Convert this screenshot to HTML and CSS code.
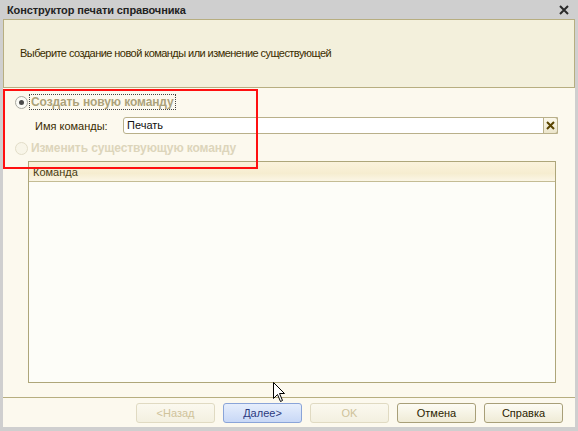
FILE: index.html
```html
<!DOCTYPE html>
<html lang="ru">
<head>
<meta charset="utf-8">
<link rel="stylesheet" href="styles.css">
</head>
<body>
<div class="window">
  <div class="titlebar">
    <span class="title">Конструктор печати справочника</span>
    <svg class="close" width="10" height="10" viewBox="0 0 10 10"><path d="M1 1L9 9M9 1L1 9" stroke="#2a2a2a" stroke-width="2"/></svg>
  </div>
  <div class="content">
    <div class="header">Выберите создание новой команды или изменение существующей</div>
    <div class="main">
      <div class="radio-row">
        <span class="radio checked"></span>
        <span class="radio-label focus">Создать новую команду</span>
      </div>
      <div class="name-row">
        <span class="name-label">Имя команды:</span>
        <div class="input">
          <span class="input-text">Печать</span>
          <span class="clear"><svg width="9" height="9" viewBox="0 0 9 9"><path d="M1 1L8 8M8 1L1 8" stroke="#5a4500" stroke-width="2"/></svg></span>
        </div>
      </div>
      <div class="radio-row">
        <span class="radio disabled"></span>
        <span class="radio-label disabled-label">Изменить существующую команду</span>
      </div>
      <div class="table">
        <div class="thead">Команда</div>
        <div class="tbody"></div>
      </div>
    </div>
    <div class="separator"></div>
    <div class="buttons">
      <span class="btn disabled-btn">&lt;Назад</span>
      <span class="btn default-btn">Далее&gt;</span>
      <span class="btn disabled-btn">OK</span>
      <span class="btn">Отмена</span>
      <span class="btn">Справка</span>
    </div>
  </div>
  <div class="highlight"></div>
  <svg class="cursor" width="13" height="21" viewBox="0 0 13 21"><path d="M0.5 0.5L0.5 16.5L4.5 12.5L7.5 19.5L9.5 18.5L6.5 11.5L11.5 11.5Z" fill="#fff" stroke="#000" stroke-width="1"/></svg>
</div>
</body>
</html>
```

FILE: styles.css
```css
html, body {
  margin: 0;
  padding: 0;
}
body {
  width: 578px;
  height: 431px;
  overflow: hidden;
  font-family: "Liberation Sans", Arial, sans-serif;
  font-size: 11px;
}
.window {
  position: relative;
  width: 578px;
  height: 431px;
  box-sizing: border-box;
  background: #cfcfcf;
  padding: 0 3px 4px 3px;
  display: flex;
  flex-direction: column;
}
.titlebar {
  height: 19px;
  display: flex;
  align-items: center;
  justify-content: space-between;
  padding: 0 6px 0 4px;
  flex: none;
}
.title {
  font-weight: bold;
  font-size: 11px;
  color: #222;
  letter-spacing: -0.1px;
}
.close {
  display: block;
}
.content {
  flex: 1;
  background: #fcf9ee;
  display: flex;
  flex-direction: column;
}
.header {
  height: 69px;
  box-sizing: border-box;
  background: #f3f0dc;
  border: 1px solid #b7ae80;
  padding: 23px 0 0 16px;
  color: #3a2c00;
  font-size: 11px;
  letter-spacing: -0.55px;
  line-height: 20px;
  flex: none;
}
.main {
  padding: 6px 17px 0 12px;
  display: flex;
  flex-direction: column;
}
.radio-row {
  height: 16px;
  display: flex;
  align-items: center;
}
.radio {
  width: 11px;
  height: 11px;
  border-radius: 50%;
  border: 1px solid #a8a8a0;
  background: #fbfbf6;
  position: relative;
  flex: none;
}
.radio.checked::after {
  content: "";
  position: absolute;
  left: 3px;
  top: 3px;
  width: 5px;
  height: 5px;
  border-radius: 50%;
  background: #4a4a4a;
}
.radio.disabled {
  border-color: #e2ddc8;
  background: #f8f5e8;
}
.radio-label {
  margin-left: 1px;
  font-weight: bold;
  font-size: 12px;
  letter-spacing: -0.1px;
  padding: 0 1px;
  line-height: 14px;
  color: #aca27a;
  border: 1px dotted transparent;
}
.radio-label.focus {
  border-color: #444;
}
.disabled-label {
  color: #dcd5bb;
}
.name-row {
  margin-top: 7px;
  margin-bottom: 6px;
  height: 17px;
  display: flex;
  align-items: center;
  padding-left: 20px;
}
.name-label {
  width: 88px;
  color: #3a2c00;
  flex: none;
}
.input {
  flex: 1;
  height: 17px;
  box-sizing: border-box;
  display: flex;
  background: #fff;
  border: 1px solid #b9b08a;
  border-radius: 3px 0 0 3px;
}
.input-text {
  flex: 1;
  padding-left: 3px;
  line-height: 15px;
  color: #111;
}
.clear {
  width: 15px;
  margin: -1px -1px -1px 0;
  box-sizing: border-box;
  border: 1px solid #b9b08a;
  border-radius: 0 3px 3px 0;
  background: linear-gradient(#fbf8ea, #ece6cc);
  display: flex;
  align-items: center;
  justify-content: center;
}
.table {
  margin: 5px 2px 0 13px;
  height: 222px;
  box-sizing: border-box;
  border: 1px solid #aea67a;
  display: flex;
  flex-direction: column;
}
.thead {
  height: 20px;
  box-sizing: border-box;
  background: linear-gradient(#fbf3dc, #f6edd0 60%, #fbf6e6);
  border-bottom: 1px solid #c4bc94;
  padding-left: 4px;
  line-height: 20px;
  color: #4a3c14;
  flex: none;
}
.tbody {
  flex: 1;
  background: #fdfdf8;
}
.separator {
  margin-top: 14px;
  height: 1px;
  background: #b7ae80;
  flex: none;
}
.buttons {
  margin-top: 5px;
  display: flex;
  justify-content: flex-end;
  gap: 8px;
  padding-right: 12px;
}
.btn {
  width: 79px;
  height: 20px;
  box-sizing: border-box;
  border: 1px solid #a89f78;
  border-radius: 3px;
  background: linear-gradient(#fdfcf4, #efebd6);
  display: flex;
  align-items: center;
  justify-content: center;
  color: #2c2400;
  font-size: 11px;
}
.disabled-btn {
  border-color: #e0dac2;
  background: linear-gradient(#fbf9ef, #f3f0e0);
  color: #cfc39b;
}
.default-btn {
  border-color: #8aa4d8;
  background: linear-gradient(#e6eefc, #c8d8f6);
  color: #2c3a80;
}
.highlight {
  position: absolute;
  left: 3px;
  top: 89px;
  width: 255px;
  height: 80px;
  box-sizing: border-box;
  border: 2px solid #ff1010;
}
.cursor {
  position: absolute;
  left: 273px;
  top: 382px;
}
```
